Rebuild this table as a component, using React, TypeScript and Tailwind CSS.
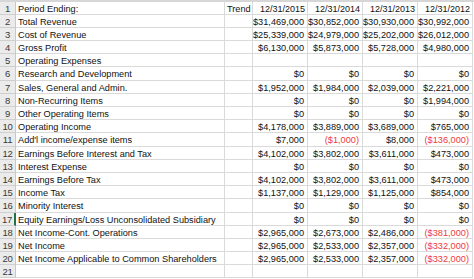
const headers = ["12/31/2015", "12/31/2014", "12/31/2013", "12/31/2012"];

const rows: [string, string[]][] = [
  ["Total Revenue", ["$31,469,000", "$30,852,000", "$30,930,000", "$30,992,000"]],
  ["Cost of Revenue", ["$25,339,000", "$24,979,000", "$25,202,000", "$26,012,000"]],
  ["Gross Profit", ["$6,130,000", "$5,873,000", "$5,728,000", "$4,980,000"]],
  ["Operating Expenses", ["", "", "", ""]],
  ["Research and Development", ["$0", "$0", "$0", "$0"]],
  ["Sales, General and Admin.", ["$1,952,000", "$1,984,000", "$2,039,000", "$2,221,000"]],
  ["Non-Recurring Items", ["$0", "$0", "$0", "$1,994,000"]],
  ["Other Operating Items", ["$0", "$0", "$0", "$0"]],
  ["Operating Income", ["$4,178,000", "$3,889,000", "$3,689,000", "$765,000"]],
  ["Add'l income/expense items", ["$7,000", "($1,000)", "$8,000", "($136,000)"]],
  ["Earnings Before Interest and Tax", ["$4,102,000", "$3,802,000", "$3,611,000", "$473,000"]],
  ["Interest Expense", ["$0", "$0", "$0", "$0"]],
  ["Earnings Before Tax", ["$4,102,000", "$3,802,000", "$3,611,000", "$473,000"]],
  ["Income Tax", ["$1,137,000", "$1,129,000", "$1,125,000", "$854,000"]],
  ["Minority Interest", ["$0", "$0", "$0", "$0"]],
  ["Equity Earnings/Loss Unconsolidated Subsidiary", ["$0", "$0", "$0", "$0"]],
  ["Net Income-Cont. Operations", ["$2,965,000", "$2,673,000", "$2,486,000", "($381,000)"]],
  ["Net Income", ["$2,965,000", "$2,533,000", "$2,357,000", "($332,000)"]],
  ["Net Income Applicable to Common Shareholders", ["$2,965,000", "$2,533,000", "$2,357,000", "($332,000)"]],
  ["", ["", "", "", ""]],
];

const cols = "grid grid-cols-[16px_209px_28px_55px_55px_55px_55px]";
const cell = "h-[13.2px] border-b border-r border-[#dadada] px-[2px] leading-[14px] whitespace-nowrap overflow-hidden";
const num = `${cell} text-right text-[9.2px] pr-[3px] pl-0`;

function RowNum({ n, active }: { n: number; active?: boolean }) {
  return (
    <div
      className={`h-[13.2px] border-b border-[#cfcfcf] bg-[#ebebeb] text-center text-[9.5px] leading-[14px] tracking-[-0.3px] text-[#3a3a3a] ${
        active ? "border-r-2 border-r-[#217346] bg-[#dedede]" : "border-r border-r-[#c8c8c8]"
      }`}
    >
      {n}
    </div>
  );
}

export default function App() {
  return (
    <div
      className="w-[474px] h-[279px] overflow-hidden bg-white text-[9.2px] text-[#111]"
      style={{ fontFamily: "'Liberation Sans', Arial, sans-serif" }}
    >
      <div className="h-[1.5px] bg-[#d6d6d6]" />
      <div className={cols}>
        <RowNum n={1} />
        <div className={cell}>Period Ending:</div>
        <div className={cell}>Trend</div>
        {headers.map(h => (
          <div key={h} className={`${cell} text-right text-[9px]`}>{h}</div>
        ))}
        {rows.map(([label, vals], i) => (
          <div key={i} className="contents">
            <RowNum n={i + 2} active={i + 2 === 17} />
            <div className={cell}>{label}</div>
            <div className={cell} />
            {vals.map((v, j) => (
              <div key={j} className={`${num} ${v.startsWith("(") ? "text-[#ee3b3b]" : ""}`}>
                {v}
              </div>
            ))}
          </div>
        ))}
      </div>
    </div>
  );
}
